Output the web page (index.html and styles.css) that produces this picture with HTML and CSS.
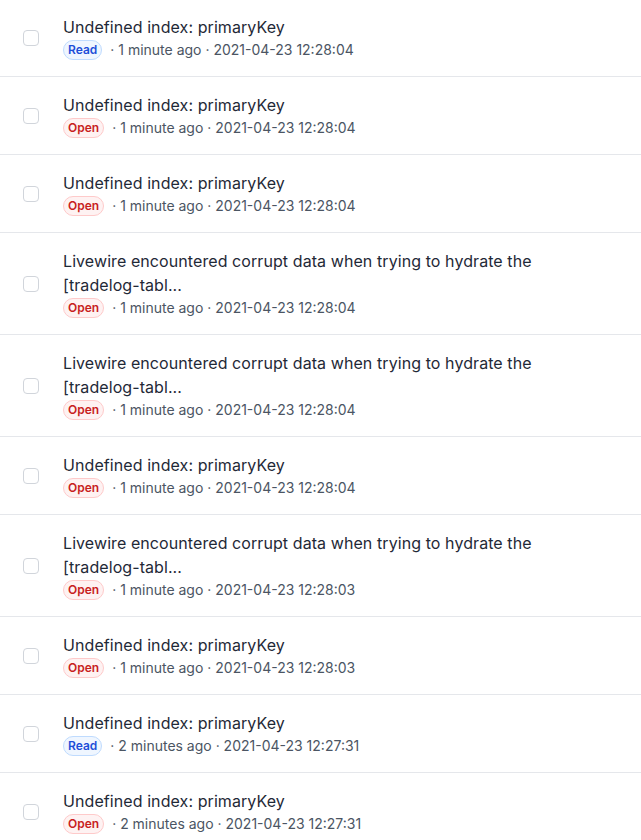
FILE: index.html
```html
<!DOCTYPE html>
<html>
<head>
<meta charset="utf-8">
<link rel="stylesheet" href="styles.css">
</head>
<body>
<ul class="list">
  <li class="row"><span class="check"></span><div class="body"><div class="title">Undefined index: primaryKey</div><div class="meta"><span class="badge read">Read</span><span class="info">· 1 minute ago · 2021-04-23 12:28:04</span></div></div></li>
  <li class="row"><span class="check"></span><div class="body"><div class="title">Undefined index: primaryKey</div><div class="meta"><span class="badge open">Open</span><span class="info">· 1 minute ago · 2021-04-23 12:28:04</span></div></div></li>
  <li class="row"><span class="check"></span><div class="body"><div class="title">Undefined index: primaryKey</div><div class="meta"><span class="badge open">Open</span><span class="info">· 1 minute ago · 2021-04-23 12:28:04</span></div></div></li>
  <li class="row"><span class="check"></span><div class="body"><div class="title">Livewire encountered corrupt data when trying to hydrate the [tradelog-tabl...</div><div class="meta"><span class="badge open">Open</span><span class="info">· 1 minute ago · 2021-04-23 12:28:04</span></div></div></li>
  <li class="row"><span class="check"></span><div class="body"><div class="title">Livewire encountered corrupt data when trying to hydrate the [tradelog-tabl...</div><div class="meta"><span class="badge open">Open</span><span class="info">· 1 minute ago · 2021-04-23 12:28:04</span></div></div></li>
  <li class="row"><span class="check"></span><div class="body"><div class="title">Undefined index: primaryKey</div><div class="meta"><span class="badge open">Open</span><span class="info">· 1 minute ago · 2021-04-23 12:28:04</span></div></div></li>
  <li class="row"><span class="check"></span><div class="body"><div class="title">Livewire encountered corrupt data when trying to hydrate the [tradelog-tabl...</div><div class="meta"><span class="badge open">Open</span><span class="info">· 1 minute ago · 2021-04-23 12:28:03</span></div></div></li>
  <li class="row"><span class="check"></span><div class="body"><div class="title">Undefined index: primaryKey</div><div class="meta"><span class="badge open">Open</span><span class="info">· 1 minute ago · 2021-04-23 12:28:03</span></div></div></li>
  <li class="row"><span class="check"></span><div class="body"><div class="title">Undefined index: primaryKey</div><div class="meta"><span class="badge read">Read</span><span class="info">· 2 minutes ago · 2021-04-23 12:27:31</span></div></div></li>
  <li class="row"><span class="check"></span><div class="body"><div class="title">Undefined index: primaryKey</div><div class="meta"><span class="badge open">Open</span><span class="info">· 2 minutes ago · 2021-04-23 12:27:31</span></div></div></li>
</ul>
</body>
</html>
```
FILE: styles.css
```css
html, body {
  margin: 0;
  padding: 0;
  background: #fff;
  font-family: Inter, "Liberation Sans", sans-serif;
}
.list {
  list-style: none;
  margin: -1px 0 0 0;
  padding: 0;
}
.row {
  display: flex;
  align-items: center;
  padding: 16px 24px 16px 23px;
  border-bottom: 1px solid #e5e7eb;
}
.check {
  flex: none;
  width: 14px;
  height: 14px;
  border: 1px solid #d1d5db;
  border-radius: 4px;
  background: #fff;
  margin-right: 24px;
}
.body {
  flex: 1;
  min-width: 0;
}
.title {
  font-size: 16px;
  line-height: 24px;
  letter-spacing: 0.08px;
  color: #1f2937;
  max-width: 480px;
}
.meta {
  display: flex;
  align-items: center;
  height: 21px;
  font-size: 14px;
  color: #4b5563;
}
.badge {
  display: inline-block;
  font-size: 12px;
  font-weight: 600;
  line-height: 18px;
  padding: 0 4px;
  border-radius: 9999px;
  border: 1px solid;
  margin-right: 8px;
}
.badge.read {
  color: #1d4ed8;
  background: #eff6ff;
  border-color: #bfdbfe;
}
.badge.open {
  color: #c81e1e;
  background: #fef2f2;
  border-color: #fecaca;
}
.info {
  white-space: nowrap;
}
```
